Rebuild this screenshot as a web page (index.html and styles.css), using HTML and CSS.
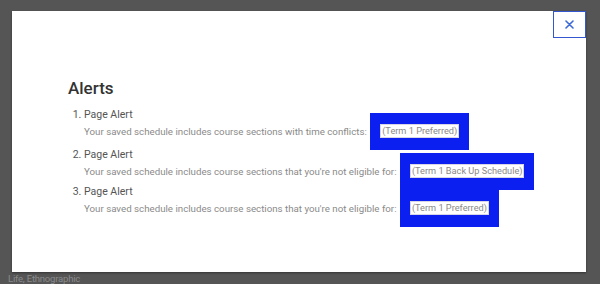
FILE: index.html
```html
<!DOCTYPE html>
<html lang="en">
<head>
    <meta charset="UTF-8">
    <meta name="viewport" content="width=device-width, initial-scale=1.0">
    <title>Alerts</title>
    <link rel="stylesheet" href="styles.css">
</head>
<body>
    <div class="modal">
        <button class="close-button" aria-label="Close">
            <svg width="9" height="9" viewBox="0 0 9 9"><path d="M1 1L8 8M8 1L1 8" stroke="#3d6ad6" stroke-width="1.6" stroke-linecap="round"/></svg>
        </button>
        <h2>Alerts</h2>
        <ol class="alert-list">
            <li>
                <div class="alert-title">Page Alert</div>
                <div class="alert-text">Your saved schedule includes course sections with time conflicts: <span class="tag"><span>(Term 1 Preferred)</span></span></div>
            </li>
            <li>
                <div class="alert-title">Page Alert</div>
                <div class="alert-text">Your saved schedule includes course sections that you're not eligible for: <span class="tag"><span>(Term 1 Back Up Schedule)</span></span></div>
            </li>
            <li>
                <div class="alert-title">Page Alert</div>
                <div class="alert-text">Your saved schedule includes course sections that you're not eligible for: <span class="tag"><span>(Term 1 Preferred)</span></span></div>
            </li>
        </ol>
    </div>
    <div class="behind">Life, Ethnographic</div>
</body>
</html>
```

FILE: styles.css
```css
body {
    font-family: Roboto, "Liberation Sans", sans-serif;
    margin: 0;
    background-color: #555556;
    padding: 11px 14px 0 12px;
    height: 284px;
    box-sizing: border-box;
    overflow: hidden;
}
.modal {
    position: relative;
    background-color: white;
    height: 261px;
    box-sizing: border-box;
    padding: 67px 0 0 56px;
    box-shadow: 0 1px 2px rgba(0,0,0,0.4);
}
.close-button {
    position: absolute;
    top: 0;
    right: 0;
    width: 33px;
    height: 27px;
    padding: 0;
    border: 1px solid #3457cf;
    background: white;
    display: flex;
    align-items: center;
    justify-content: center;
    cursor: pointer;
}
h2 {
    margin: 0 0 10px 0;
    font-size: 17px;
    font-weight: 500;
    line-height: 20px;
    color: #333;
}
.alert-list {
    margin: 0;
    padding-left: 16px;
    color: #555;
    font-size: 10.5px;
}
.alert-list li {
    margin-bottom: 10px;
}
.alert-list li:nth-child(2) {
    margin-bottom: 7px;
}
.alert-title {
    line-height: 14px;
}
.alert-text {
    display: flex;
    align-items: center;
    height: 14px;
    margin-top: 2px;
    font-size: 9.72px;
    color: #8a8a8a;
    white-space: pre;
}
.tag {
    display: inline-block;
    margin: -12px 0 -12px 1px;
    border-style: solid;
    border-color: #0a1ff0;
    border-width: 11px 10px 12px 10px;
    background: #0a1ff0;
}
.tag span {
    display: block;
    background: white;
    border: 1px solid #d6d6e6;
    padding: 0 1px;
    font-size: 9.2px;
    line-height: 12px;
    color: #8a8a8a;
}
.behind {
    margin: 1px 0 0 -4px;
    font-size: 9.5px;
    color: #8a8a8a;
    letter-spacing: -0.2px;
}
```
